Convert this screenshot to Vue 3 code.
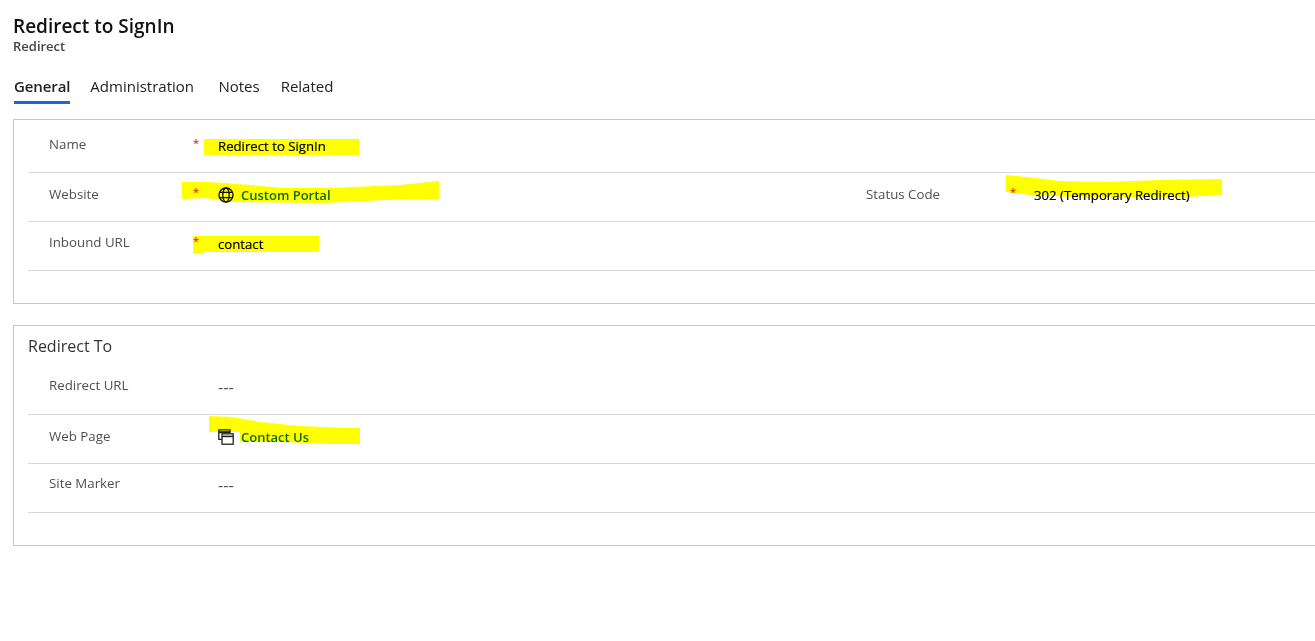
<script setup>
const tabs = [
  { label: 'General', active: true },
  { label: 'Administration' },
  { label: 'Notes' },
  { label: 'Related' },
]
const marks = [
  '204,139 359,139 359,155 204,155',
  '182,182 207,182 225,183 285,188 330,188 400,185 439,181 439,199 385,200 325,203 230,202 205,198 182,199',
  '193,236 319,236 319,252 203,252 203,253 193,253',
  '1006,175 1027,177 1060,181 1107,182 1160,180 1222,179 1222,195 1187,197 1140,197 1073,197 1030,195 1006,192',
  '209,416 232,417 260,422 300,426 347,428 360,428 360,444 328,444 283,442 240,442 240,432 209,432',
]
</script>

<template>
  <div class="page">
    <header class="head">
      <h1 class="title">Redirect to SignIn</h1>
      <div class="sub">Redirect</div>
    </header>

    <nav class="tabs">
      <span v-for="t in tabs" :key="t.label" class="tab" :class="{ active: t.active }">{{ t.label }}</span>
    </nav>

    <section class="card first">
      <div class="row">
        <div class="field">
          <span class="label">Name</span>
          <span class="req">*</span>
          <span class="value">Redirect to SignIn</span>
        </div>
      </div>
      <div class="row lower">
        <div class="field">
          <span class="label">Website</span>
          <span class="req">*</span>
          <span class="value link">
            <svg class="icon" viewBox="0 0 16 16" fill="none" stroke="#111" stroke-width="1.3">
              <circle cx="8" cy="8" r="7" />
              <ellipse cx="8" cy="8" rx="3.2" ry="7" />
              <path d="M1.6 5.4h12.8M1.6 10.6h12.8" />
            </svg>
            <span class="linktext">Custom Portal</span>
          </span>
        </div>
        <div class="field right">
          <span class="label">Status Code</span>
          <span class="req">*</span>
          <span class="value">302 (Temporary Redirect)</span>
        </div>
      </div>
      <div class="row">
        <div class="field">
          <span class="label">Inbound URL</span>
          <span class="req">*</span>
          <span class="value">contact</span>
        </div>
      </div>
    </section>

    <section class="card second">
      <h2 class="card-title">Redirect To</h2>
      <div class="row short">
        <div class="field">
          <span class="label">Redirect URL</span>
          <span class="req"></span>
          <span class="value dash">---</span>
        </div>
      </div>
      <div class="row lower">
        <div class="field">
          <span class="label">Web Page</span>
          <span class="req"></span>
          <span class="value link">
            <svg class="icon" viewBox="0 0 16 16" fill="none" stroke="#222" stroke-width="1.3">
              <path d="M12 4V.8H.8v9.6h3.2" />
              <path d="M.8 3.2H12" stroke-width="2" />
              <rect x="4" y="4.8" width="11.2" height="10.4" fill="#fff" />
              <path d="M4 7.4h11.2" stroke-width="1.6" />
            </svg>
            <span class="linktext">Contact Us</span>
          </span>
        </div>
      </div>
      <div class="row tight">
        <div class="field">
          <span class="label">Site Marker</span>
          <span class="req"></span>
          <span class="value dash">---</span>
        </div>
      </div>
    </section>

    <svg class="marks" width="1315" height="641" viewBox="0 0 1315 641">
      <polygon v-for="m in marks" :key="m" :points="m" fill="#ffff00" />
    </svg>
  </div>
</template>

<style>
html, body { margin: 0; background: #fff; overflow: hidden; }
</style>

<style scoped>
.page {
  position: relative;
  width: 1315px;
  height: 641px;
  overflow: hidden;
  box-sizing: border-box;
  padding-left: 13px;
  font-family: "Open Sans", "Noto Sans", sans-serif;
  color: #111;
  background: #fff;
}
.head { padding-top: 13px; }
.title {
  margin: 0;
  font-size: 19px;
  line-height: 26px;
  font-weight: 600;
  color: #111;
}
.sub {
  font-size: 13px;
  line-height: 14px;
  font-weight: 600;
  color: #444;
}
.tabs {
  display: flex;
  margin-top: 23px;
  height: 28px;
  padding-left: 1px;
}
.tab {
  font-size: 15px;
  line-height: 20px;
  margin-right: 24px;
  color: #222;
}
.tab.active {
  font-weight: 600;
  margin-right: 20px;
  height: 25px;
  border-bottom: 3px solid #2263d6;
  letter-spacing: -0.1px;
}
.tab:nth-child(3) { margin-left: 0.4px; margin-right: 21px; }
.card {
  border: 1px solid #c8c8c8;
  border-right: none;
  padding-left: 14px;
  box-sizing: border-box;
}
.first {
  margin-top: 15px;
  height: 185px;
  padding-top: 4px;
}
.second {
  margin-top: 21px;
  height: 221px;
}
.card-title {
  margin: 0;
  font-size: 16px;
  font-weight: 400;
  line-height: 22px;
  padding-top: 9px;
  color: #333;
}
.row {
  display: flex;
  height: 49px;
  box-sizing: border-box;
  border-bottom: 1px solid #d8d8d8;
}
.row.short { height: 58px; }
.field {
  display: flex;
  align-items: flex-start;
  flex: 0 0 823px;
  padding-top: 11px;
}
.field.right { flex: 1; }
.row.short .field { padding-top: 19px; }
.row.tight .field { padding-top: 10px; }
.label {
  flex: 0 0 144px;
  margin-left: 21px;
  font-size: 13.3px;
  line-height: 18px;
  color: #505050;
}
.row.lower .label { margin-top: 1px; }
.req {
  flex: 0 0 25px;
  font-size: 11px;
  line-height: 14px;
  margin-top: 1px;
  color: #e00000;
}
.value {
  display: flex;
  align-items: center;
  gap: 7px;
  margin-top: 2px;
  font-size: 13.2px;
  line-height: 18px;
  font-weight: 500;
  color: #000;
  white-space: nowrap;
  -webkit-text-stroke: 0.2px currentColor;
}
.right .label { flex: 0 0 144px; margin-left: 15px; }
.right .req { flex-basis: 24px; }
.dash { color: #555; font-size: 16.5px; font-weight: 400; margin-top: 2px; -webkit-text-stroke: 0; }
.linktext { color: #0f6cbd; font-size: 13px; font-weight: 600; -webkit-text-stroke: 0; }
.icon { width: 16px; height: 16px; flex: none; }
.marks {
  position: absolute;
  left: 0;
  top: 0;
  mix-blend-mode: multiply;
  pointer-events: none;
}
</style>
